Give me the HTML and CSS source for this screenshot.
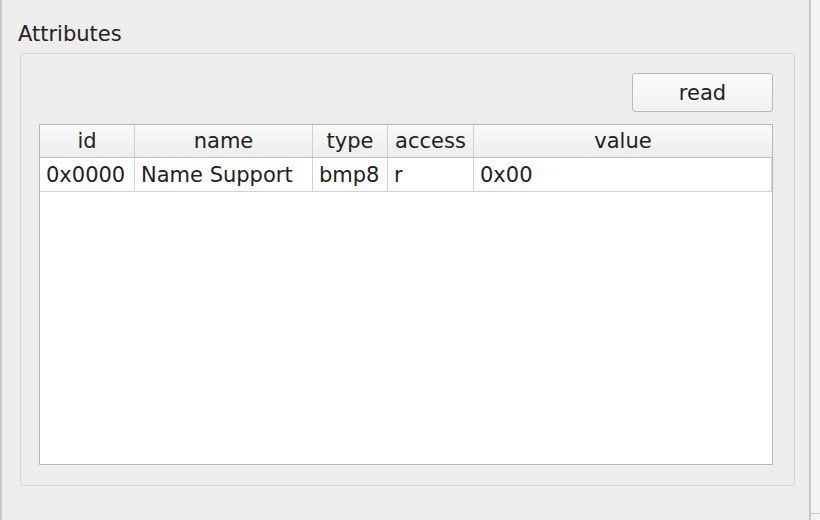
FILE: index.html
```html
<!DOCTYPE html>
<html lang="en">
<head>
  <meta charset="UTF-8">
  <title>Attributes</title>
  <link rel="stylesheet" href="styles.css">
</head>
<body>

  <div class="window">
    <div class="pane">
      <div class="group-title">Attributes</div>

      <div class="group">
        <div class="toolbar">
          <button type="button" class="btn">read</button>
        </div>

        <div class="table">
          <div class="row header">
            <div class="cell c-id">id</div>
            <div class="cell c-name">name</div>
            <div class="cell c-type">type</div>
            <div class="cell c-access">access</div>
            <div class="cell c-value">value</div>
          </div>
          <div class="row">
            <div class="cell c-id">0x0000</div>
            <div class="cell c-name">Name Support</div>
            <div class="cell c-type">bmp8</div>
            <div class="cell c-access">r</div>
            <div class="cell c-value">0x00</div>
          </div>
        </div>
      </div>
    </div>

    <div class="edge">
      <div class="edge-top"></div>
    </div>
  </div>

</body>
</html>
```

FILE: styles.css
```css
html, body {
  margin: 0;
  padding: 0;
}

body {
  font-family: "DejaVu Sans", Verdana, sans-serif;
  font-size: 21px;
  color: #222;
  background-color: #ededed;
}

.window {
  display: flex;
  height: 520px;
  overflow: hidden;
}

.pane {
  width: 811px;
  height: 520px;
  box-sizing: border-box;
  border-left: 2px solid #c9c9c9;
  border-right: 2px solid #c6c6c6;
  padding: 22px 0 0 16px;
  flex: none;
}

.group-title {
  line-height: 24px;
  height: 24px;
  margin-bottom: 7px;
}

.group {
  margin-left: 2px;
  width: 775px;
  height: 433px;
  box-sizing: border-box;
  border: 1px solid #d6d6d6;
  border-radius: 3px;
  padding: 19px 21px 20px 18px;
  display: flex;
  flex-direction: column;
  gap: 12px;
}

.toolbar {
  display: flex;
  justify-content: flex-end;
}

.btn {
  width: 141px;
  height: 39px;
  font-family: inherit;
  font-size: 21px;
  color: #222;
  background: linear-gradient(#fbfbfb, #f1f1f1);
  border: 1px solid #b9b9b9;
  border-radius: 3px;
  padding: 0;
}

.table {
  flex: 1;
  background: #fff;
  border: 1px solid #b8b8b8;
  display: flex;
  flex-direction: column;
}

.row {
  display: flex;
  height: 34px;
  border-bottom: 1px solid #d2d2d2;
  box-sizing: border-box;
}

.row.header {
  height: 33px;
  background: linear-gradient(#fafafa, #ececec);
  border-bottom: 1px solid #c4c4c4;
}

.cell {
  box-sizing: border-box;
  border-right: 1px solid #d2d2d2;
  padding: 0 6px;
  display: flex;
  align-items: center;
  white-space: nowrap;
}

.header .cell {
  justify-content: center;
  border-right-color: #cfcfcf;
}

.c-id { width: 95px; }
.c-name { width: 178px; }
.c-type { width: 75px; }
.c-access { width: 86px; }
.c-value { flex: 1; }

.header .c-value {
  border-right: none;
}

.edge {
  flex: 1;
  background: #f4f4f4;
}

.edge-top {
  height: 513px;
  border-bottom: 1px solid #c8c8c8;
}
```
